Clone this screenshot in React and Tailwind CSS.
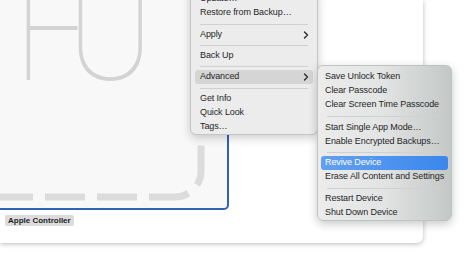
function Chevron({ white }) {
  return (
    <svg width="6" height="8" viewBox="0 0 6 8" className="shrink-0">
      <path d="M1.5 1 L4.5 4 L1.5 7" fill="none" stroke={white ? "#fff" : "#2a2a2a"} strokeWidth="1.4" strokeLinecap="round" strokeLinejoin="round" />
    </svg>
  );
}

function Item({ label, sub, active, blue }) {
  return (
    <div
      className={
        "mx-[4px] h-[14px] pl-[5px] pr-[4px] flex items-center justify-between rounded-[3px] whitespace-nowrap " +
        (blue
          ? "bg-gradient-to-r from-[#5d9df0] to-[#3a86ee] text-white"
          : active
          ? "bg-[#d5d5d5] text-[#262626]"
          : "text-[#262626]")
      }
    >
      <span>{label}</span>
      {sub && <Chevron />}
    </div>
  );
}

function SubItem({ label, blue }) {
  return (
    <div
      className={
        "mx-[3px] h-[14px] pl-[4px] flex items-center rounded-[3px] whitespace-nowrap " +
        (blue ? "bg-gradient-to-r from-[#62a0ee] to-[#3b87ee] text-white" : "text-[#262626]")
      }
    >
      {label}
    </div>
  );
}

function Sep({ h = "h-[7px]" }) {
  return (
    <div className={h + " flex items-center mx-[9px]"}>
      <div className="h-px w-full bg-[#d0d0d0]" />
    </div>
  );
}

export default function App() {
  return (
    <div className="relative w-[474px] h-[266px] overflow-hidden bg-white font-['Liberation_Sans',Arial,sans-serif]">
      <div className="w-[423px] h-[243px] bg-white rounded-br-[6px] shadow-[0_1px_5px_rgba(0,0,0,0.28)] overflow-hidden flex flex-col items-start">
        <div className="relative ml-[-40px] mt-[-60px] w-[269px] h-[270px] shrink-0 border-2 border-[#2f63b5] rounded-br-[5px] bg-[#f8f8f8]">
          <svg className="absolute left-[-2px] top-[-2px]" width="269" height="270" viewBox="-40 -60 269 270">
            <path d="M -59 197 H 175 A 26 26 0 0 0 201 171 V -60" fill="none" stroke="#dcdcdc" strokeWidth="7" strokeDasharray="40 12" />
            <g fill="#d3d3d3" fontFamily="Roboto, 'Liberation Sans', sans-serif" fontWeight="100" fontSize="130" transform="translate(0 80) scale(1 1.1) translate(0 -80)">
              <text x="-78" y="80">D</text>
              <text x="14" y="80">F</text>
              <text x="67" y="80">U</text>
            </g>
          </svg>
        </div>
        <div className="ml-[5px] mt-[5px] h-[11px] px-[3px] bg-[#dcdcdc] rounded-[2px] text-[8px] font-bold leading-[11px] text-[#1e1e1e] whitespace-nowrap">
          Apple Controller
        </div>
      </div>

      {/* main context menu */}
      <div className="absolute left-[190px] top-[-13px] w-[128px] pt-[4px] rounded-[6px] bg-[#ececec] border border-[#c4c4c4] shadow-[0_3px_10px_rgba(0,0,0,0.2)] text-[9px] tracking-[-0.1px]">
        <Item label="Update…" />
        <Item label="Restore from Backup…" />
        <Sep h="h-[8px]" />
        <Item label="Apply" sub />
        <Sep />
        <Item label="Back Up" />
        <Sep />
        <Item label="Advanced" sub active />
        <Sep h="h-[8px]" />
        <Item label="Get Info" />
        <Item label="Quick Look" />
        <Item label="Tags…" />
      </div>

      {/* submenu */}
      <div className="absolute left-[317px] top-[65px] w-[135px] pt-[4px] rounded-[6px] bg-gradient-to-r from-[#ececec] via-[#e2e3e3] to-[#c3c8c7] border border-[#bfc2c2] shadow-[0_3px_10px_rgba(0,0,0,0.22)] text-[9px] tracking-[-0.1px]">
        <SubItem label="Save Unlock Token" />
        <SubItem label="Clear Passcode" />
        <SubItem label="Clear Screen Time Passcode" />
        <Sep h="h-[9px]" />
        <SubItem label="Start Single App Mode…" />
        <SubItem label="Enable Encrypted Backups…" />
        <Sep h="h-[7px]" />
        <SubItem label="Revive Device" blue />
        <SubItem label="Erase All Content and Settings" />
        <Sep h="h-[8px]" />
        <SubItem label="Restart Device" />
        <SubItem label="Shut Down Device" />
      </div>
    </div>
  );
}
